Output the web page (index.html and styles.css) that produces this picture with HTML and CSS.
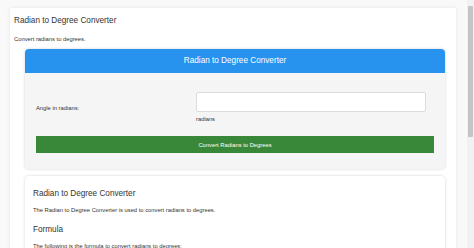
FILE: index.html
```html
<!DOCTYPE html>
<html>
<head>
  <meta name="viewport" content="width=device-width, initial-scale=1.0">
  <title>Radian to Degree Converter</title>
  <link rel="stylesheet" href="styles.css">
</head>
<body>

  <div class="page">
    <h1>Radian to Degree Converter</h1>
    <p class="intro">Convert radians to degrees.</p>

    <!-- Converter card -->
    <div class="card converter">
      <div class="card-header">Radian to Degree Converter</div>
      <div class="card-body">
        <div class="field-row">
          <label for="radians" class="field-label">Angle in radians:</label>
          <div class="field-input">
            <input id="radians" type="text" />
            <span class="unit">radians</span>
          </div>
        </div>
        <button class="convert-btn">Convert Radians to Degrees</button>
      </div>
    </div>

    <!-- Info card -->
    <div class="card info">
      <h2>Radian to Degree Converter</h2>
      <p>The Radian to Degree Converter is used to convert radians to degrees.</p>
      <h2>Formula</h2>
      <p>The following is the formula to convert radians to degrees:</p>
    </div>
  </div>

  <div class="scrollbar"><div class="thumb"></div></div>

</body>
</html>
```

FILE: styles.css
```css
* {
  box-sizing: border-box;
  margin: 0;
  padding: 0;
}

body {
  font-family: "Liberation Sans", Arial, sans-serif;
  font-size: 5.8px;
  color: #333;
  background-color: #f9f9f9;
  height: 100vh;
  overflow: hidden;
}

.page {
  margin: 8px 18px 0 10px;
  padding: 8px 4px 40px 4px;
  background: white;
  box-shadow: 0 0 4px rgba(0, 0, 0, 0.08);
  min-height: 400px;
}

h1 {
  font-size: 8.2px;
  font-weight: normal;
  line-height: 10px;
}

.intro {
  margin-top: 10px;
  line-height: 7px;
}

/* Cards */
.card {
  margin: 7px 0 0 11px;
  width: 420px;
  border-radius: 4px;
  box-shadow: 0 0 3px rgba(0, 0, 0, 0.18);
}

.converter {
  margin-top: 6px;
  background: #f5f5f5;
}

.card-header {
  height: 24px;
  line-height: 24px;
  text-align: center;
  font-size: 8.2px;
  color: white;
  background-color: #2893ef;
  border-radius: 4px 4px 0 0;
}

.card-body {
  padding: 19px 11px 16px 11px;
}

.field-row {
  display: flex;
  align-items: center;
}

.field-label {
  width: 160px;
}

.field-input {
  flex: 1;
  display: flex;
  flex-direction: column;
  padding-right: 8px;
}

.field-input input {
  height: 20px;
  border: 1px solid #dcdcdc;
  border-radius: 2px;
  background: white;
}

.unit {
  margin-top: 4px;
  line-height: 7px;
}

.convert-btn {
  display: block;
  width: 100%;
  height: 17px;
  margin-top: 13px;
  border: none;
  background-color: #398739;
  color: white;
  font-family: inherit;
  font-size: 5.8px;
}

.info {
  background: white;
  padding: 13px 8px 20px 8px;
}

.info h2 {
  font-size: 8.2px;
  font-weight: normal;
  line-height: 10px;
}

.info p {
  margin: 8px 0 11px 0;
  line-height: 7px;
}

/* Fake window scrollbar */
.scrollbar {
  position: fixed;
  top: 0;
  right: 0;
  width: 7px;
  height: 100%;
  background: #f1f1f1;
  padding-top: 6px;
}

.thumb {
  margin: 0 1px;
  height: 131px;
  background: #c4c4c4;
  border-radius: 1px;
}
```
